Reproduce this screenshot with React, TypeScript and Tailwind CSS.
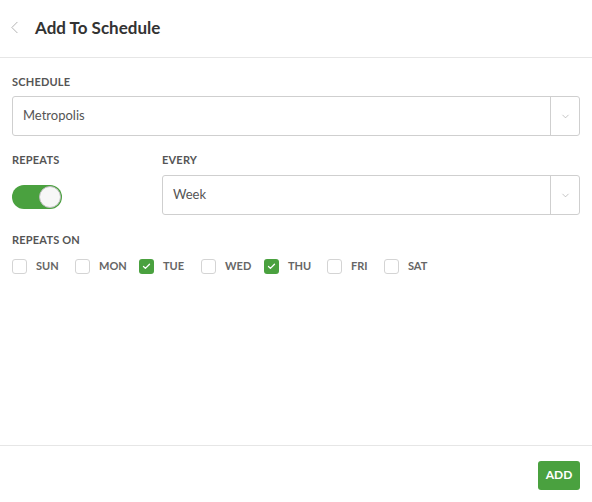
import { ChevronLeft, ChevronDown, Check } from "lucide-react";

const days = [
  { label: "SUN", on: false, w: "w-[63px]" },
  { label: "MON", on: false, w: "w-[64px]" },
  { label: "TUE", on: true, w: "w-[62px]" },
  { label: "WED", on: false, w: "w-[63px]" },
  { label: "THU", on: true, w: "w-[63px]" },
  { label: "FRI", on: false, w: "w-[57px]" },
  { label: "SAT", on: false, w: "w-[60px]" },
];

function Select({ value }: { value: string }) {
  return (
    <div className="flex h-10 items-stretch rounded-[3px] border border-[#cfcfcf] bg-white">
      <div className="flex flex-1 items-center px-[10px] text-[13px] text-[#555]">{value}</div>
      <div className="flex w-[29px] items-center justify-center border-l border-[#cfcfcf]">
        <ChevronDown size={11} strokeWidth={1.5} className="text-[#aaa]" />
      </div>
    </div>
  );
}

function Label({ children }: { children: React.ReactNode }) {
  return <div className="text-[11px] font-bold leading-[14px] tracking-[0.2px] text-[#555]">{children}</div>;
}

export default function App() {
  return (
    <div className="flex h-[502px] w-[592px] flex-col bg-white font-['Lato',sans-serif] text-[#333]">
      <div className="flex h-[58px] items-center border-b border-[#e6e6e6] pl-[4px] pb-[2px]">
        <ChevronLeft size={21} strokeWidth={1.1} className="text-[#b0b0b0]" />
        <span className="ml-[10px] text-[17px] font-bold text-[#333]">Add To Schedule</span>
      </div>

      <div className="flex-1 px-3 pt-[17px]">
        <Label>SCHEDULE</Label>
        <div className="mt-[7px]">
          <Select value="Metropolis" />
        </div>

        <div className="mt-[17px] flex gap-[25px]">
          <div className="w-[125px]">
            <Label>REPEATS</Label>
            <div className="mt-[18px] flex h-6 w-[50px] items-center justify-end rounded-full bg-[#4aa13f] pr-px">
              <div className="h-[22px] w-[22px] rounded-full border border-[#bdbdbd] bg-[#f7f7f7]" />
            </div>
          </div>
          <div className="flex-1">
            <Label>EVERY</Label>
            <div className="mt-[8px]">
              <Select value="Week" />
            </div>
          </div>
        </div>

        <div className="mt-[18px]">
          <Label>REPEATS ON</Label>
          <div className="mt-[11px] flex">
            {days.map((d) => (
              <div key={d.label} className={`${d.w} flex items-center`}>
                <div
                  className={
                    d.on
                      ? "flex h-[15px] w-[15px] items-center justify-center rounded-[3px] bg-[#4aa13f]"
                      : "h-[15px] w-[15px] rounded-[3px] border border-[#d4d4d4] bg-white"
                  }
                >
                  {d.on && <Check size={9} strokeWidth={3.5} className="text-white" />}
                </div>
                <span className="ml-[9px] text-[11px] font-bold text-[#666]">{d.label}</span>
              </div>
            ))}
          </div>
        </div>
      </div>

      <div className="flex h-[57px] items-center justify-end border-t border-[#e6e6e6] px-3 pt-[2px]">
        <button className="h-[29px] w-[42px] rounded-[3px] bg-[#4aa13f] text-[12px] font-bold text-white">ADD</button>
      </div>
    </div>
  );
}
